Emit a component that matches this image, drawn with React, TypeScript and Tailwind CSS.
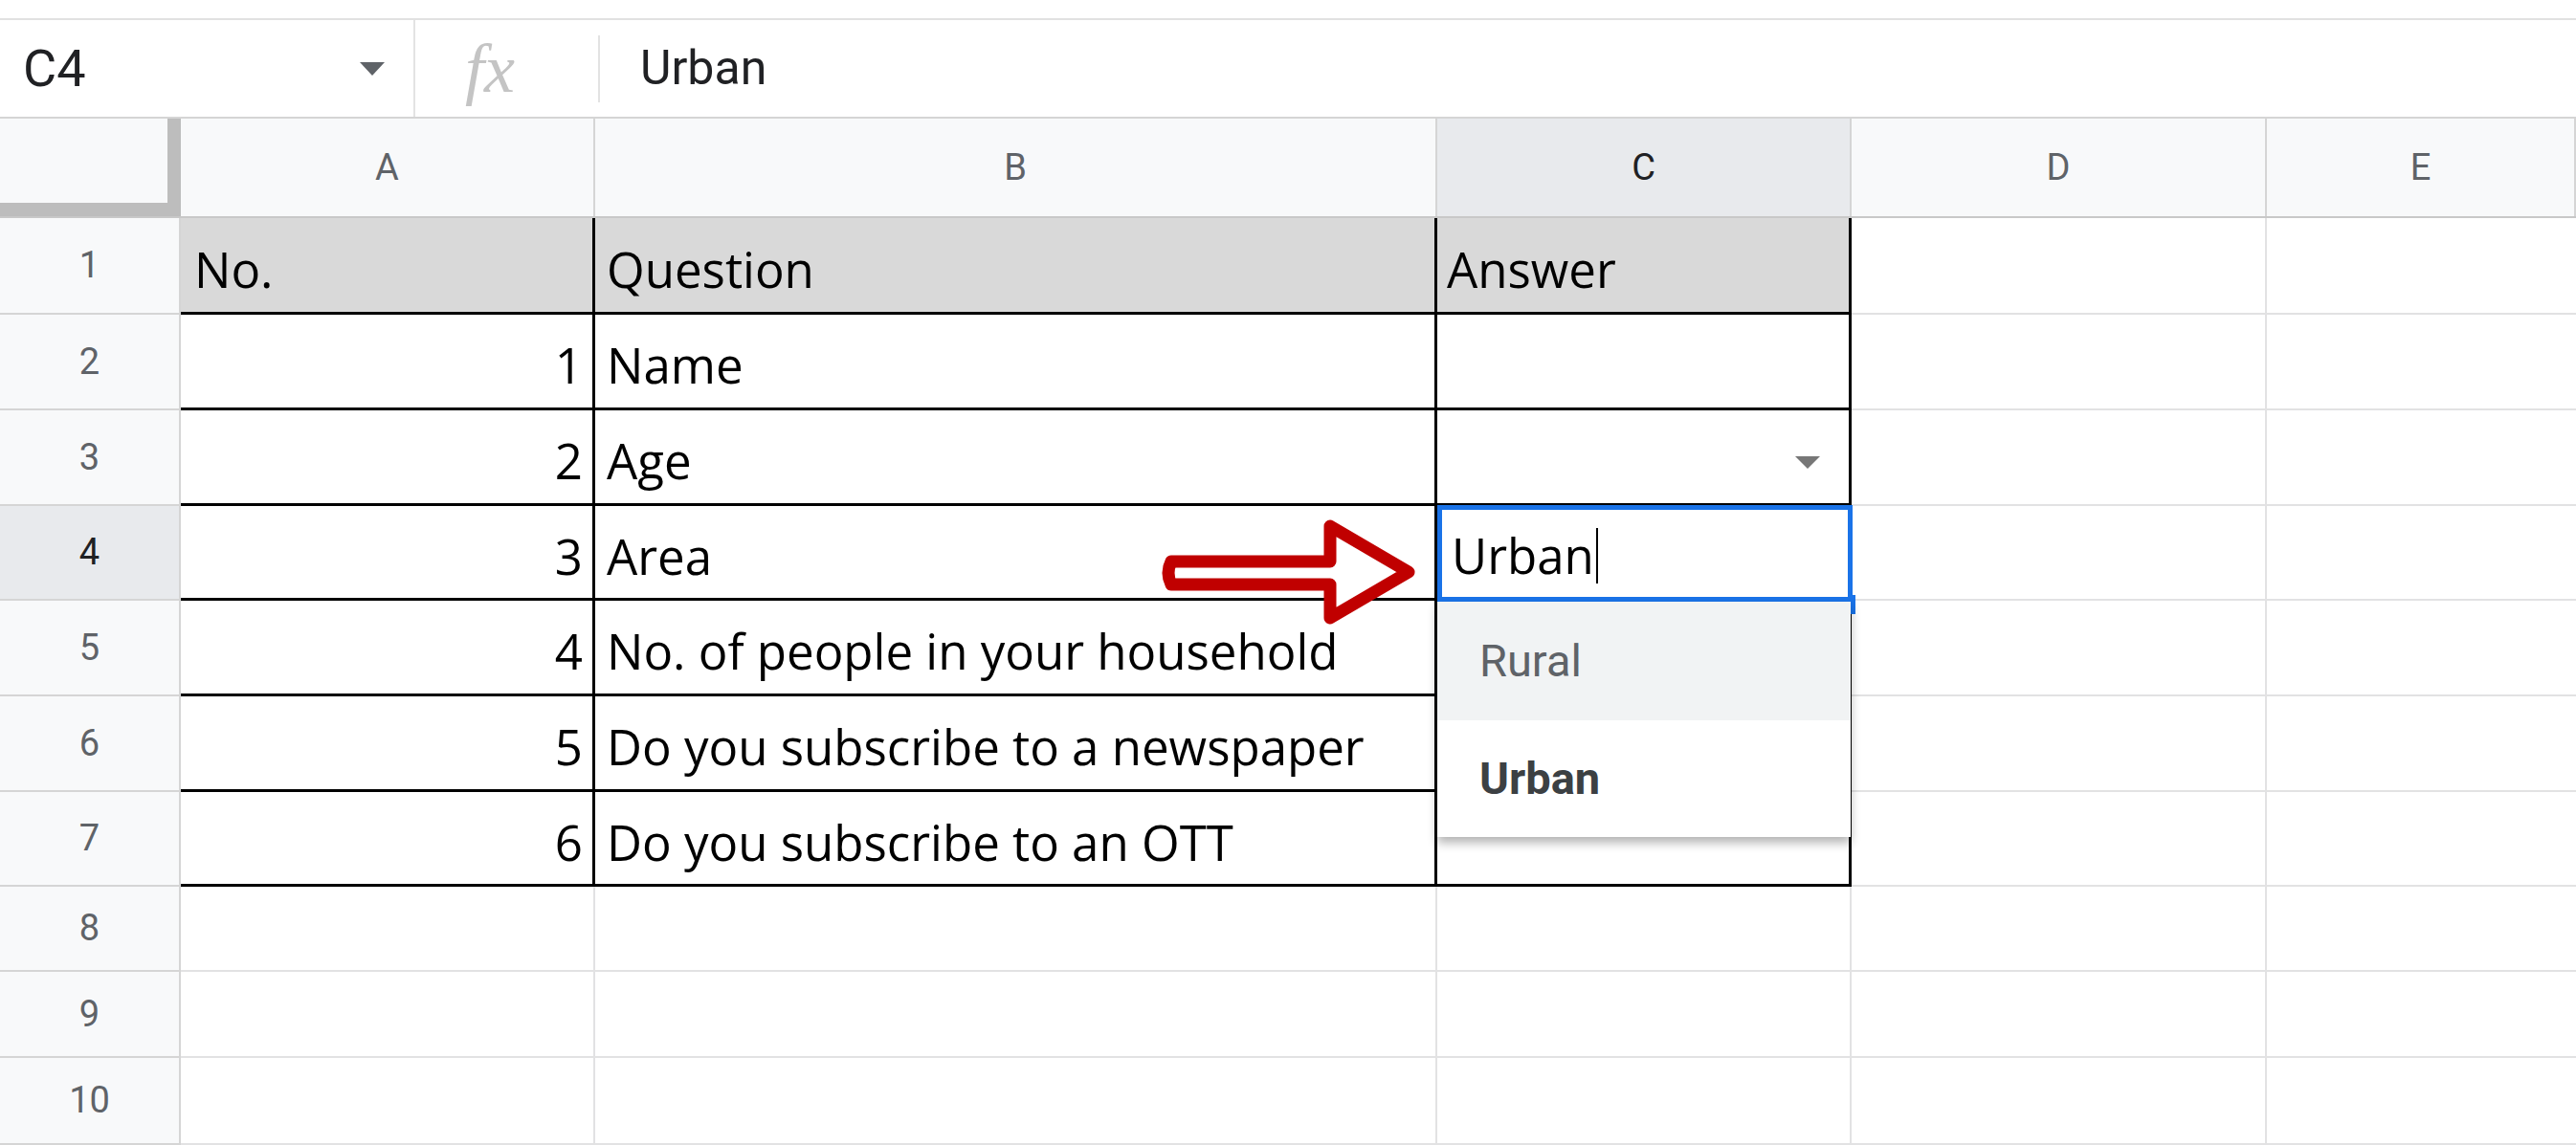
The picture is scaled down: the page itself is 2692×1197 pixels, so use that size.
import React from "react";

const cols = ["A", "B", "C", "D", "E"];
const colW = ["w-[433px]", "w-[880px]", "w-[433px]", "w-[434px]", "flex-1"];

const rows: { n: number; h: string; a?: string; b?: string; c?: string }[] = [
  { n: 1, h: "h-[101px]", a: "No.", b: "Question", c: "Answer" },
  { n: 2, h: "h-[100px]", a: "1", b: "Name" },
  { n: 3, h: "h-[100px]", a: "2", b: "Age" },
  { n: 4, h: "h-[99px]", a: "3", b: "Area" },
  { n: 5, h: "h-[100px]", a: "4", b: "No. of people in your household" },
  { n: 6, h: "h-[100px]", a: "5", b: "Do you subscribe to a newspaper" },
  { n: 7, h: "h-[99px]", a: "6", b: "Do you subscribe to an OTT" },
  { n: 8, h: "h-[89px]" },
  { n: 9, h: "h-[90px]" },
  { n: 10, h: "h-[91px]" },
];

const cellFont = { fontFamily: '"Open Sans", "Liberation Sans", sans-serif' };
const uiFont = { fontFamily: 'Roboto, "Liberation Sans", sans-serif' };

export default function App() {
  return (
    <div className="relative w-[2692px] h-[1197px] bg-white overflow-hidden" style={uiFont}>
      {/* formula bar */}
      <div className="h-[21px] border-b-2 border-[#e1e1e1]" />
      <div className="flex items-center h-[103px] border-b-2 border-[#d5d5d5]">
        <div className="flex items-center w-[434px] h-full pl-[24px] pr-[30px] border-r-2 border-[#e3e3e3]">
          <span className="text-[54px] text-[#202124]">C4</span>
          <span className="ml-auto w-0 h-0 border-l-[13px] border-r-[13px] border-t-[14px] border-l-transparent border-r-transparent border-t-[#5f6368]" />
        </div>
        <div className="w-[193px] flex items-center h-[70px] border-r-2 border-[#e3e3e3]">
          <span className="ml-[52px] text-[72px] italic text-[#c4c4c4]" style={{ fontFamily: '"Liberation Serif", serif' }}>
            fx
          </span>
        </div>
        <span className="ml-[42px] text-[50px] text-[#202124]">Urban</span>
      </div>

      {/* column headers */}
      <div className="flex h-[104px] bg-[#f8f9fa] border-b-2 border-[#c8c8c8]">
        <div className="w-[189px] h-full flex flex-col">
          <div className="flex flex-1">
            <div className="flex-1" />
            <div className="w-[14px] bg-[#bdbdbd]" />
          </div>
          <div className="h-[14px] bg-[#bdbdbd]" />
        </div>
        {cols.map((c, i) => (
          <div
            key={c}
            className={`${colW[i]} h-full flex items-center justify-center text-[38px] text-[#5f6368] border-r-2 border-[#d5d5d5] ${c === "C" ? "bg-[#e8eaed] text-[#202124]" : ""}`}
          >
            {c}
          </div>
        ))}
      </div>

      {/* grid rows */}
      {rows.map((r) => {
        const inTable = r.n <= 7;
        const head = r.n === 1;
        const tb = inTable ? "border-b-[3px] border-r-[3px] border-black" : "border-b-2 border-r-2 border-[#e2e2e3]";
        const bg = head ? "bg-[#d9d9d9]" : "bg-white";
        return (
          <div key={r.n} className={`flex ${r.h}`}>
            <div
              className={`w-[189px] h-full flex items-center justify-center text-[38px] border-r-2 border-b-2 border-[#d5d5d5] ${r.n === 4 ? "bg-[#e8eaed] text-[#202124]" : "bg-[#f8f9fa] text-[#5f6368]"}`}
            >
              {r.n}
            </div>
            <div
              className={`${colW[0]} h-full flex items-center pt-[8px] text-[51px] text-black ${tb} ${bg} ${head ? "justify-start pl-[14px]" : "justify-end pr-[10px]"}`}
              style={cellFont}
            >
              {r.a}
            </div>
            <div className={`${colW[1]} h-full flex items-center pt-[8px] pl-[12px] text-[51px] text-black ${tb} ${bg}`} style={cellFont}>
              {r.b}
            </div>
            <div className={`${colW[2]} relative h-full flex items-center pt-[8px] pl-[10px] text-[51px] text-black ${tb} ${bg}`} style={cellFont}>
              {r.c}
              {r.n === 3 && (
                <span className="absolute right-[30px] top-[48px] w-0 h-0 border-l-[13px] border-r-[13px] border-t-[13px] border-l-transparent border-r-transparent border-t-[#777]" />
              )}
            </div>
            <div className={`${colW[3]} h-full border-r-2 border-b-2 border-[#e2e2e3]`} />
            <div className="flex-1 h-full border-b-2 border-[#e2e2e3]" />
          </div>
        );
      })}

      {/* active cell editor */}
      <div
        className="absolute left-[1502px] top-[528px] w-[434px] h-[101px] bg-white border-[5px] border-[#1a73e8] flex items-center pl-[10px] pt-[4px] text-[51px] text-black"
        style={cellFont}
      >
        Urban
        <span className="w-[2px] h-[58px] bg-black ml-[2px]" />
      </div>
      <div className="absolute left-[1932px] top-[622px] w-[7px] h-[20px] bg-[#1a73e8]" />

      {/* dropdown */}
      <div className="absolute left-[1502px] top-[629px] w-[432px] h-[246px] bg-white shadow-[0_6px_10px_rgba(0,0,0,0.3)] flex flex-col">
        <div className="h-[124px] bg-[#f1f3f4] flex items-center pl-[44px] text-[47px] text-[#5f6368]">Rural</div>
        <div className="flex-1 flex items-center pl-[44px] text-[47px] font-bold text-[#3c4043]">Urban</div>
      </div>

      {/* arrow */}
      <svg className="absolute left-0 top-0 pointer-events-none" width="2692" height="1197">
        <path
          d="M1224,587 L1390,587 L1390,550 L1472,598 L1390,646 L1390,611 L1224,611 Q1218,599 1224,587 Z"
          fill="white"
          stroke="#c00000"
          strokeWidth="13"
          strokeLinejoin="round"
        />
      </svg>
    </div>
  );
}
